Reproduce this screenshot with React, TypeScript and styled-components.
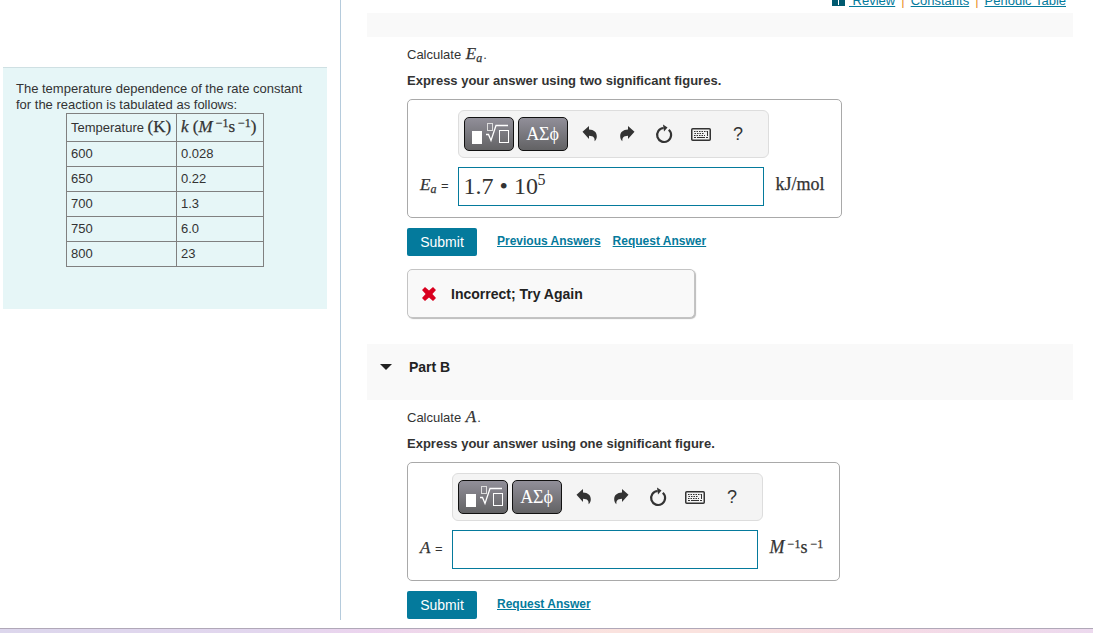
import React from "react";
import styled, { createGlobalStyle } from "styled-components";

const sans = `"Liberation Sans", Arial, sans-serif`;
const serif = `"Liberation Serif", "Times New Roman", serif`;

const GlobalStyle = createGlobalStyle`
  *, *::before, *::after { box-sizing: border-box; }
  body { margin: 0; background: #fff; color: #333; font: 13px/16px ${sans}; }
  p { margin: 0; }
`;

const Page = styled.div`
  display: flex;
  flex-direction: column;
  min-height: 100vh;
`;

const Columns = styled.div`
  flex: 1;
  display: grid;
  grid-template-columns: 341px 1fr;
  margin-bottom: 8px;
`;

const Sidebar = styled.aside`
  padding: 67px 13px 0 3px;
  border-right: 1px solid #b5cbdc;
`;

const Problem = styled.section`
  padding: 13px 13px 42px;
  background: #e6f6f7;
  border-top: 1px solid #cfe0e3;
`;

const MathText = styled.span<{ $large?: boolean }>`
  margin: 0 1px;
  font-family: ${serif};
  font-size: ${(p) => (p.$large ? "18px" : "17px")};
  line-height: 14px;
  white-space: nowrap;
  -webkit-text-stroke: 0.25px currentColor;
  sub, sup { font-size: 12px; line-height: 0; }
  sub { vertical-align: -3px; }
  sup { margin-left: 3px; vertical-align: 5px; }
`;

const DataTable = styled.table`
  width: 198px;
  margin: 0 auto;
  border-collapse: collapse;
  th, td {
    height: 25px;
    padding: 0 4px;
    border: 1px solid #808080;
    font-weight: normal;
    text-align: left;
    white-space: nowrap;
  }
  th { height: 28px; }
  th:first-child { width: 110px; }
  ${MathText} { margin: 0; }
`;

const Main = styled.main`
  padding: 0 20px 0 26px;
`;

const TopLinks = styled.nav`
  display: flex;
  align-items: flex-end;
  justify-content: flex-end;
  gap: 6px;
  height: 13px;
  padding: 0 7px 4px 0;
  color: #e8912d;
`;

const Link = styled.a<{ $strong?: boolean }>`
  color: #047a9c;
  font-size: 12px;
  font-weight: ${(p) => (p.$strong ? "bold" : "normal")};
  text-decoration: underline;
  white-space: pre;
`;

const TopLink = styled(Link)`
  display: flex;
  align-items: center;
  gap: 4px;
  font-size: 13px;
`;

const PartBand = styled.div`
  height: 24px;
  background: #f9f9f9;
`;

const PartHeader = styled.header`
  height: 56px;
  margin-top: 26px;
  padding: 15px 13px;
  background: #f9f9f9;
`;

const PartToggle = styled.button`
  display: flex;
  align-items: center;
  gap: 17px;
  padding: 0;
  border: 0;
  background: none;
  color: #222;
  font: bold 14px/16px ${sans};
`;

const PartBody = styled.section`
  padding: 10px 0 0 40px;
`;

const Prompt = styled.p`
  height: 16px;
  margin-bottom: 10px;
`;

const Instruction = styled.p`
  margin-bottom: 10px;
  font-weight: bold;
`;

const AnswerBox = styled.div`
  display: grid;
  grid-template-columns: auto 306px auto;
  align-items: center;
  row-gap: 9px;
  width: fit-content;
  padding: 10px 15px 11px 11px;
  border: 1px solid #a9a9a9;
  border-radius: 5px;
`;

const Toolbar = styled.div`
  grid-column: 2 / 4;
  justify-self: start;
  display: flex;
  align-items: center;
  height: 48px;
  padding: 0 11px 0 5px;
  border: 1px solid #ddd;
  border-radius: 6px;
  background: #f4f4f4;
`;

const PaletteButton = styled.button`
  display: flex;
  align-items: center;
  justify-content: center;
  width: 50px;
  height: 34px;
  margin-right: 4px;
  padding: 0;
  border: 1px solid #111;
  border-radius: 5px;
  background: linear-gradient(#918f99, #626264);
  color: #fff;
  font: 18px/20px ${serif};
`;

const ToolButton = styled.button`
  display: flex;
  align-items: center;
  justify-content: center;
  width: 37px;
  height: 34px;
  padding: 0;
  border: 0;
  background: none;
  color: #333;
  font: 18px/20px ${sans};
`;

const AnswerLabel = styled.label`
  padding: 0 9px 2px 0;
  white-space: nowrap;
`;

const MathField = styled.div`
  display: flex;
  height: 39px;
  padding: 0 5px;
  border: 1px solid #047a9c;
  background: #fff;
`;

const FieldInput = styled.input`
  flex: 1;
  min-width: 0;
  height: 37px;
  padding: 0;
  border: 0;
  background: none;
  color: #333;
  font: 24px ${serif};
  outline: 0;
`;

const BaseInput = styled(FieldInput)`
  flex: 0 0 74px;
`;

const ExponentInput = styled(FieldInput)`
  height: 24px;
  font-size: 16px;
`;

const Unit = styled.span`
  padding: 0 0 2px 11px;
`;

const Actions = styled.div`
  display: flex;
  align-items: center;
  gap: 12px;
  height: 28px;
  margin-top: 10px;
  ${Link} { padding-bottom: 2px; }
`;

const Submit = styled.button`
  width: 70px;
  height: 28px;
  margin-right: 8px;
  padding: 0;
  border: 0;
  border-radius: 2px;
  background: #047a9c;
  color: #fff;
  font: 14px/16px ${sans};
`;

const Feedback = styled.div`
  display: flex;
  align-items: center;
  gap: 15px;
  width: 288px;
  height: 49px;
  margin-top: 13px;
  padding: 0 14px;
  border: 1px solid #c4c4c4;
  border-radius: 5px;
  background: #f9f9f9;
  box-shadow: 1px 1px 1px #bbb;
  color: #222;
  font-size: 14px;
  font-weight: bold;
`;

const Strip = styled.footer`
  height: 5px;
  border-top: 1px solid #b0a8b8;
  background: linear-gradient(90deg, #dcd6ec 0%, #e2d6ee 24%, #ecd4ee 34%, #fae2de 56%, #fae2de 66%, #f6dae4 80%, #ecd9ee 100%);
`;

const TemplateIcon = () => (
  <svg width="40" height="24" viewBox="0 0 40 24" fill="none" stroke="#fff" aria-hidden="true">
    <rect x="3" y="9" width="10" height="13" fill="#fff" stroke="none" />
    <rect x="18.5" y="1.5" width="5" height="7" stroke="#ddd" />
    <path d="M17 12.500h2.500l2.500 6 5-15h12" strokeWidth="1.300" />
    <rect x="30.500" y="8.500" width="9" height="12" />
  </svg>
);

const UndoIcon = ({ flip = false }: { flip?: boolean }) => (
  <svg width="16" height="18" viewBox="0 0 16 18" aria-hidden="true">
    <path
      fill="#333"
      transform={flip ? "matrix(-1 0 0 1 16 0)" : undefined}
      d="M.500 6.800 7 1v3.600c5 .1 7.800 2.800 7.800 6.600 0 2-.7 3.600-2.200 5 .3-3.700-1-5.300-5.600-5.500v3.300z"
    />
  </svg>
);

const ResetIcon = () => (
  <svg width="18" height="20" viewBox="0 0 18 20" fill="none" aria-hidden="true">
    <path d="M13.800 5.800A7 7 0 1 1 8.600 4" stroke="#333" strokeWidth="2.200" />
    <path d="M8 .500 12.500 3.500 9 7.500z" fill="#333" />
  </svg>
);

const KeyboardIcon = () => (
  <svg width="20" height="13" viewBox="0 0 20 13" fill="none" stroke="#333" aria-hidden="true">
    <rect x=".75" y=".75" width="18.500" height="11.500" rx="1" strokeWidth="1.500" />
    <path d="M3 3.500h14M3.500 5.500h10M3 7.500h11" strokeDasharray="1.500 1" />
    <path d="M16.500 3v5M3 9.500h2M6 9.500h8M15 9.500h2" />
  </svg>
);

const CrossIcon = () => (
  <svg width="14" height="14" viewBox="0 0 14 14" aria-hidden="true">
    <path fill="#d9001f" d="M3 0l4 3.600L11 0l3 3-3.600 4L14 11l-3 3-4-3.600L3 14l-3-3 3.600-4L0 3z" />
  </svg>
);

const BookIcon = () => (
  <svg width="13" height="12" viewBox="0 0 13 12" aria-hidden="true">
    <path fill="#005a70" d="M0 0h6v11H0zM7 0h6v11H7zM0 10h13v1H0z" />
  </svg>
);

const Tools = () => (
  <Toolbar role="toolbar" aria-label="Equation tools">
    <PaletteButton aria-label="Templates"><TemplateIcon /></PaletteButton>
    <PaletteButton aria-label="Symbols">ΑΣϕ</PaletteButton>
    <ToolButton aria-label="Undo"><UndoIcon /></ToolButton>
    <ToolButton aria-label="Redo"><UndoIcon flip /></ToolButton>
    <ToolButton aria-label="Reset"><ResetIcon /></ToolButton>
    <ToolButton aria-label="Keyboard shortcuts"><KeyboardIcon /></ToolButton>
    <ToolButton aria-label="Help">?</ToolButton>
  </Toolbar>
);

const PerMolarSecond = () => (
  <><i>M</i><sup>−1</sup>s<sup>−1</sup></>
);

const rates = [
  ["600", "0.028"],
  ["650", "0.22"],
  ["700", "1.3"],
  ["750", "6.0"],
  ["800", "23"],
];

export default function App() {
  return (
    <Page>
      <GlobalStyle />
      <Columns>
        <Sidebar>
          <Problem>
            <p>The temperature dependence of the rate constant for the reaction is tabulated as follows:</p>
            <DataTable>
              <thead>
                <tr>
                  <th scope="col">Temperature <MathText>(K)</MathText></th>
                  <th scope="col"><MathText><i>k</i> (<PerMolarSecond />)</MathText></th>
                </tr>
              </thead>
              <tbody>
                {rates.map(([t, k]) => (
                  <tr key={t}><td>{t}</td><td>{k}</td></tr>
                ))}
              </tbody>
            </DataTable>
          </Problem>
        </Sidebar>
        <Main>
          <TopLinks>
            <TopLink href="#review"><BookIcon /><span> Review</span></TopLink>|
            <TopLink href="#constants">Constants</TopLink>|
            <TopLink href="#periodic-table">Periodic Table</TopLink>
          </TopLinks>
          <PartBand />
          <PartBody>
            <Prompt>Calculate <MathText><i>E<sub>a</sub></i></MathText>.</Prompt>
            <Instruction>Express your answer using two significant figures.</Instruction>
            <AnswerBox>
              <Tools />
              <AnswerLabel htmlFor="energy"><MathText><i>E<sub>a</sub></i></MathText> =</AnswerLabel>
              <MathField>
                <BaseInput id="energy" defaultValue="1.7 • 10" />
                <ExponentInput aria-label="Exponent" defaultValue="5" />
              </MathField>
              <Unit><MathText $large>kJ/mol</MathText></Unit>
            </AnswerBox>
            <Actions>
              <Submit>Submit</Submit>
              <Link $strong href="#previous">Previous Answers</Link>
              <Link $strong href="#request-a">Request Answer</Link>
            </Actions>
            <Feedback role="status"><CrossIcon />Incorrect; Try Again</Feedback>
          </PartBody>
          <PartHeader>
            <PartToggle aria-expanded="true">
              <svg width="12" height="6" viewBox="0 0 12 6" aria-hidden="true"><path fill="#222" d="M0 0h12L6 6z" /></svg>
              Part B
            </PartToggle>
          </PartHeader>
          <PartBody>
            <Prompt>Calculate <MathText><i>A</i></MathText>.</Prompt>
            <Instruction>Express your answer using one significant figure.</Instruction>
            <AnswerBox>
              <Tools />
              <AnswerLabel htmlFor="factor"><MathText><i>A</i></MathText> =</AnswerLabel>
              <MathField>
                <FieldInput id="factor" />
              </MathField>
              <Unit><MathText $large><PerMolarSecond /></MathText></Unit>
            </AnswerBox>
            <Actions>
              <Submit>Submit</Submit>
              <Link $strong href="#request-b">Request Answer</Link>
            </Actions>
          </PartBody>
        </Main>
      </Columns>
      <Strip />
    </Page>
  );
}
